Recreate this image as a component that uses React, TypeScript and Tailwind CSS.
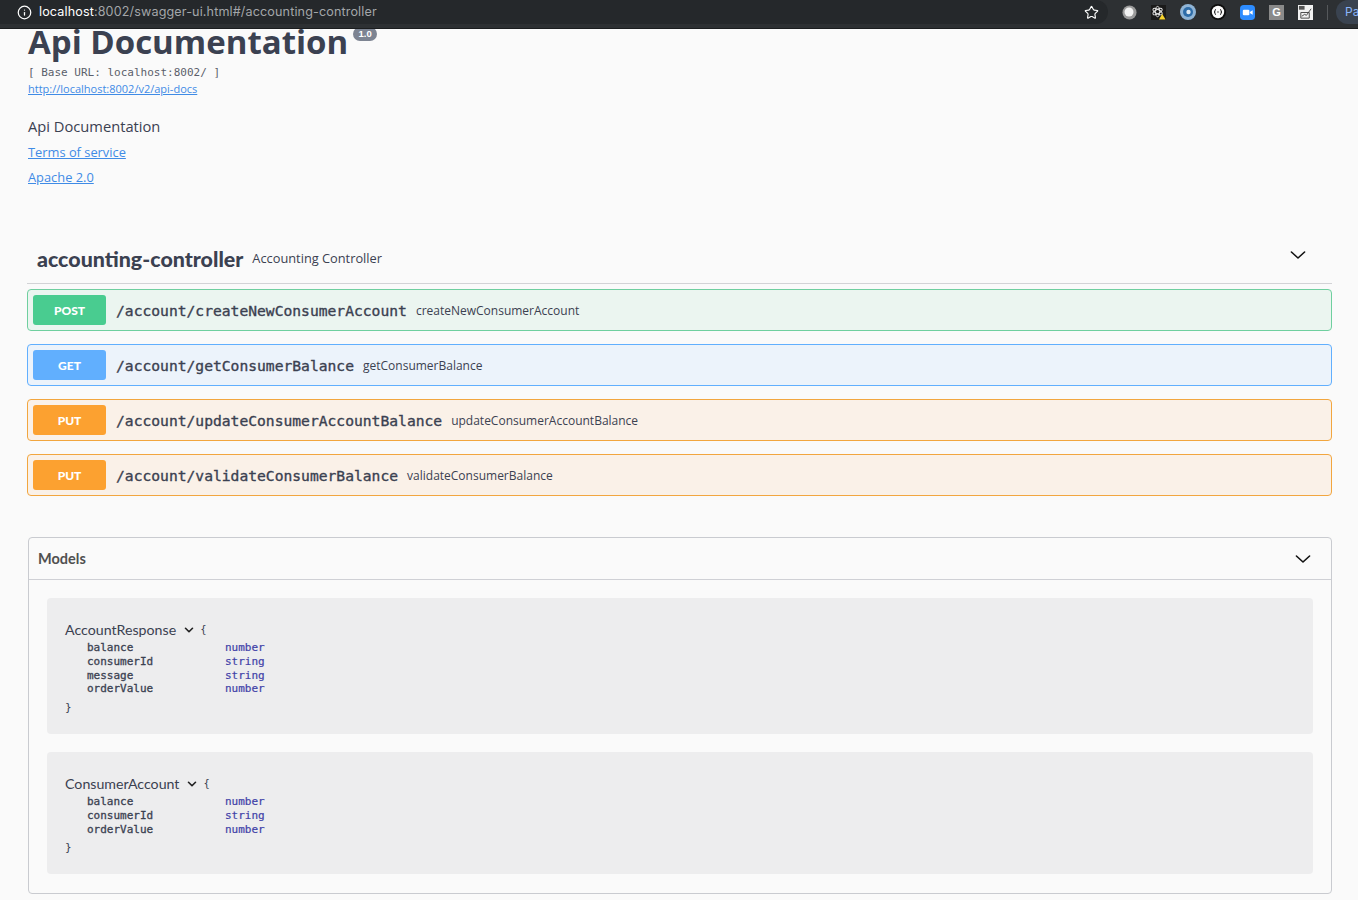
import { ChevronDown, Info, Star } from "lucide-react";

const sans = "font-['Open_Sans',sans-serif]";
const mono = "font-['DejaVu_Sans_Mono',monospace]";
const head = "font-['Lato',sans-serif]";

interface IOperation
{
    method: string;
    path: string;
    name: string;
    box: string;
    badge: string;
}

const operations: IOperation[] = [
    {
        method: "POST",
        path: "/account/createNewConsumerAccount",
        name: "createNewConsumerAccount",
        box: "border-[#6fcf9f] bg-[#ebf5f0]",
        badge: "bg-[#49cc90]",
    },
    {
        method: "GET",
        path: "/account/getConsumerBalance",
        name: "getConsumerBalance",
        box: "border-[#61affe] bg-[#ecf3fb]",
        badge: "bg-[#61affe]",
    },
    {
        method: "PUT",
        path: "/account/updateConsumerAccountBalance",
        name: "updateConsumerAccountBalance",
        box: "border-[#f2a63f] bg-[#faf1e8]",
        badge: "bg-[#fca130]",
    },
    {
        method: "PUT",
        path: "/account/validateConsumerBalance",
        name: "validateConsumerBalance",
        box: "border-[#f2a63f] bg-[#faf1e8]",
        badge: "bg-[#fca130]",
    },
];

const models = [
    {
        name: "AccountResponse",
        height: "h-[136px]",
        fields: [
            ["balance", "number"],
            ["consumerId", "string"],
            ["message", "string"],
            ["orderValue", "number"],
        ],
    },
    {
        name: "ConsumerAccount",
        height: "h-[122px]",
        fields: [
            ["balance", "number"],
            ["consumerId", "string"],
            ["orderValue", "number"],
        ],
    },
];

const BrowserBar = () => (
    <header className="relative z-10 flex h-[29px] items-start overflow-hidden border-b border-[#1b1d1f] bg-[#2d3033]">
        <div className="flex h-[24px] w-[1108px] shrink-0 items-center rounded-r-full bg-[#25282b] pl-[17px]">
            <Info size={15} strokeWidth={2} className="text-white" />
            <span className="ml-[7px] font-['Inter',sans-serif] text-[12.6px] tracking-[0.01em] text-[#a3a6a9]">
                <span className="text-white">localhost</span>
                :8002/swagger-ui.html#/accounting-controller
            </span>
            <Star size={15} strokeWidth={1.8} className="ml-auto mr-[9px] text-white" />
        </div>
        <div className="flex h-[24px] flex-1 items-center gap-[14px] pl-[14px]">
            <svg viewBox="0 0 16 16" className="h-[15px] w-[15px]">
                <circle cx="8" cy="8" r="7.5" fill="#9a9a9a" />
                <circle cx="7.5" cy="7.5" r="4.8" fill="#f2f2f2" />
            </svg>
            <svg viewBox="0 0 16 16" className="h-[15px] w-[15px]">
                <rect width="16" height="16" fill="#1a1a1a" />
                <ellipse cx="7" cy="7" rx="5.5" ry="2.2" fill="none" stroke="#e8e8e8" transform="rotate(30 7 7)" />
                <ellipse cx="7" cy="7" rx="5.5" ry="2.2" fill="none" stroke="#e8e8e8" transform="rotate(-30 7 7)" />
                <ellipse cx="7" cy="7" rx="2.2" ry="5.5" fill="none" stroke="#e8e8e8" />
                <path d="M12 9.5l3.5 6h-7z" fill="#f6d32d" />
            </svg>
            <svg viewBox="0 0 16 16" className="h-[16px] w-[16px]">
                <circle cx="8" cy="8" r="8" fill="#8fb4d6" />
                <circle cx="8" cy="8" r="5" fill="#2d6ca8" />
                <circle cx="8.5" cy="8" r="2.2" fill="#dfe9f2" />
            </svg>
            <svg viewBox="0 0 16 16" className="h-[16px] w-[16px]">
                <circle cx="8" cy="8" r="8" fill="#0d0d0d" />
                <circle cx="8" cy="8" r="6.2" fill="#fafafa" />
                <path d="M6 5.5q-1 0-1 1v1l-1 .5 1 .5v1q0 1 1 1M10 5.5q1 0 1 1v1l1 .5-1 .5v1q0 1-1 1" fill="none" stroke="#111" />
                <circle cx="8" cy="8" r=".7" fill="#111" />
            </svg>
            <svg viewBox="0 0 16 16" className="h-[15px] w-[15px]">
                <rect width="16" height="16" rx="4" fill="#2d8cff" />
                <rect x="3" y="5" width="7" height="6" rx="1.2" fill="#fff" />
                <path d="M10.5 7.5l3-2v5l-3-2z" fill="#fff" />
            </svg>
            <span className="flex h-[15px] w-[15px] items-center justify-center bg-[#8a8a8a] font-['Liberation_Sans',sans-serif] text-[11px] font-bold leading-none text-white">
                G
            </span>
            <svg viewBox="0 0 16 16" className="h-[15px] w-[15px]">
                <rect width="16" height="16" fill="#f2f2f2" />
                <rect x="1" y="1" width="6" height="4" fill="#555" />
                <path d="M3 14V8h9v6zM4 12l3-2 2 1 5-7" fill="none" stroke="#444" />
            </svg>
            <span className="h-[15px] w-px shrink-0 bg-[#55585b]" />
            <span className="-ml-[6px] flex h-[24px] w-[30px] shrink-0 items-center rounded-l-full bg-[#3a4350] pl-[9px] font-['Inter',sans-serif] text-[12px] text-[#8ab4f8]">
                Pa
            </span>
        </div>
    </header>
);

const ApiInfo = () => (
    <section className="px-[28px]">
        <div className="-mt-[5px] flex items-start">
            <h1 className={`${sans} text-[33px] font-bold leading-[36px] text-[#3b4151]`}>
                Api Documentation
            </h1>
            <span className="mt-[3px] ml-[5px] flex h-[14px] w-[24px] items-center justify-center rounded-[7px] bg-[#7d8492] font-['Liberation_Sans',sans-serif] text-[9.5px] font-bold text-white">
                1.0
            </span>
        </div>
        <p className={`${mono} mt-[6px] text-[11px] leading-[14px] text-[#5a5f6b]`}>
            [ Base URL: localhost:8002/ ]
        </p>
        <a className={`${sans} block text-[11px] leading-[17px] text-[#3f8be6] underline`}>
            http://localhost:8002/v2/api-docs
        </a>
        <p className={`${sans} mt-[19px] text-[14.7px] leading-[20px] text-[#3b4151]`}>
            Api Documentation
        </p>
        <a className={`${sans} mt-[7px] block text-[12.85px] leading-[19px] text-[#3f8be6] underline`}>
            Terms of service
        </a>
        <a className={`${sans} mt-[6px] block text-[12.85px] leading-[19px] text-[#3f8be6] underline`}>
            Apache 2.0
        </a>
    </section>
);

const Operation = ({ op }: { op: IOperation }) => (
    <div className={`flex h-[42px] items-center rounded-[4px] border px-[5px] ${op.box}`}>
        <span className={`${head} flex h-[30px] w-[73px] items-center justify-center rounded-[3px] pt-[1px] text-[12px] font-black text-white ${op.badge}`}>
            {op.method}
        </span>
        <span className={`${mono} ml-[10px] mt-[2px] text-[14.65px] leading-none text-[#3b4151] [-webkit-text-stroke:0.35px_#3b4151]`}>
            {op.path}
        </span>
        <span className={`${sans} ml-[9px] mt-[2px] text-[12px] text-[#3b4151]`}>{op.name}</span>
    </div>
);

const Model = ({ model }: { model: (typeof models)[number] }) => (
    <div className={`${model.height} rounded-[4px] bg-[#ededee] pl-[18px] pt-[22px]`}>
        <div className="flex h-[20px] items-center">
            <span className={`${head} text-[14.2px] leading-[20px] text-[#3b4151]`}>{model.name}</span>
            <ChevronDown size={14} strokeWidth={2.8} className="ml-[6px] text-[#222]" />
            <span className={`${mono} ml-[4px] text-[10.5px] text-[#3b4151]`}>{"{"}</span>
        </div>
        <div className={`${mono} mt-[1px] text-[11px] leading-[13.8px]`}>
            {model.fields.map(([key, type]) => (
                <div key={key} className="flex pl-[22px]">
                    <span className="w-[138px] text-[#3b4151] [-webkit-text-stroke:0.3px_#3b4151]">{key}</span>
                    <span className="text-[#4141a8] [-webkit-text-stroke:0.2px_#4141a8]">{type}</span>
                </div>
            ))}
        </div>
        <div className={`${mono} mt-[5px] text-[11px] leading-[14px] text-[#3b4151]`}>{"}"}</div>
    </div>
);

const App = () =>
{
    return (
        <div className="h-[900px] w-[1358px] overflow-hidden bg-[#fafafa]">
            <BrowserBar />
            <ApiInfo />
            <main className="mt-[50px] pl-[27px] pr-[26px]">
                <div className="flex h-[47px] items-start justify-between border-b border-[#d2d3d6] pl-[10px] pr-[22px]">
                    <div className="mt-[7px] flex items-center">
                        <h2 className={`${head} text-[21.4px] font-black leading-[30px] text-[#3b4151]`}>
                            accounting-controller
                        </h2>
                        <span className={`${sans} ml-[9px] text-[12.8px] text-[#3b4151]`}>Accounting Controller</span>
                    </div>
                    <ChevronDown size={24} strokeWidth={1.4} className="mt-[6px] scale-x-110 text-[#111]" />
                </div>
                <div className="mt-[5px] flex flex-col gap-[13px]">
                    {operations.map((op) => (
                        <Operation key={op.path} op={op} />
                    ))}
                </div>
                <section className="ml-px mt-[41px] h-[357px] rounded-[4px] border border-[#c9cbd0] bg-[#fafafa]">
                    <div className="flex h-[42px] items-center justify-between border-b border-[#cfd0d5] pl-[9px] pr-[16px]">
                        <h4 className={`${head} text-[14.5px] font-bold text-[#505050]`}>Models</h4>
                        <ChevronDown size={24} strokeWidth={1.4} className="scale-x-110 text-[#111]" />
                    </div>
                    <div className="flex flex-col gap-[18px] px-[18px] pt-[18px]">
                        {models.map((model) => (
                            <Model key={model.name} model={model} />
                        ))}
                    </div>
                </section>
            </main>
        </div>
    );
};

export default App;
